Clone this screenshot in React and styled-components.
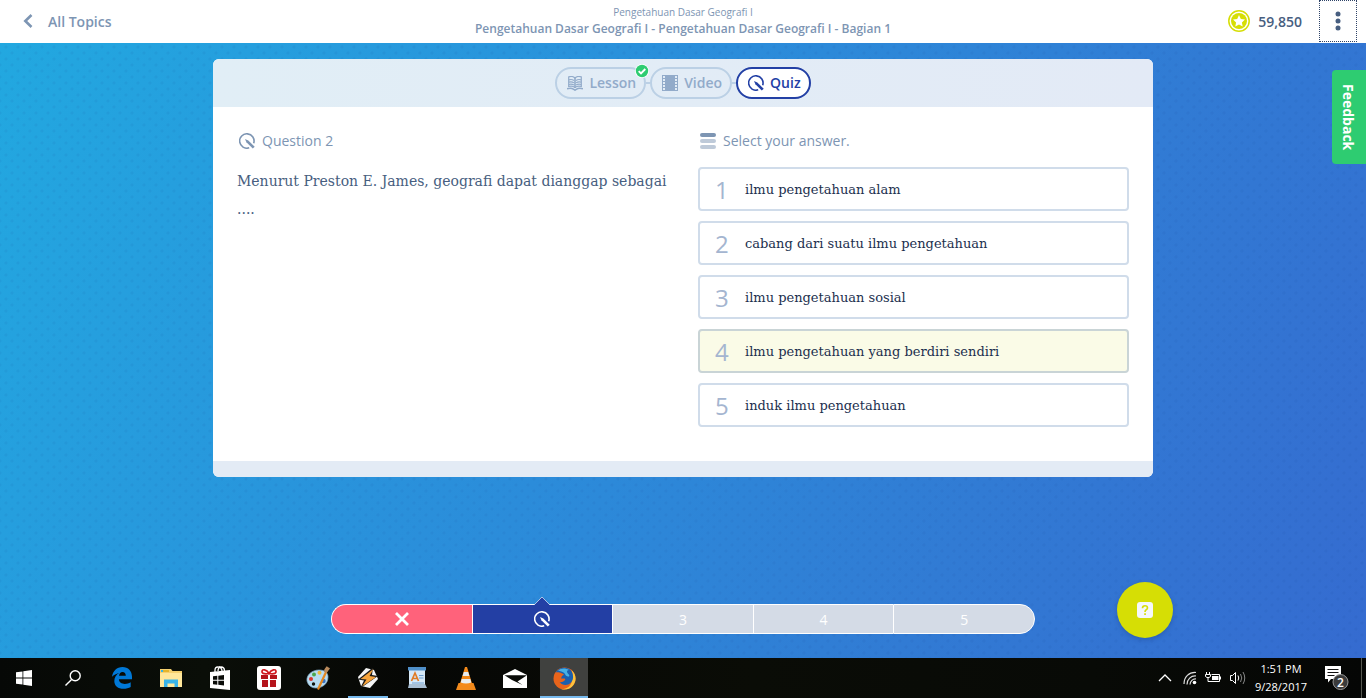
import React, { useState } from "react";
import styled, { createGlobalStyle, css } from "styled-components";

const sans = `"Open Sans", "Noto Sans", sans-serif`;
const serif = `"DejaVu Serif", "Liberation Serif", serif`;
const slate = "#7d95b3";
const navy = "#2340a5";

const Global = createGlobalStyle`
  *, *::before, *::after { box-sizing: border-box; }
  body { margin: 0; font-family: ${sans}; color: ${slate}; }
  button { font-family: inherit; cursor: pointer; margin: 0; }
  svg { display: block; flex: none; }
`;

const Page = styled.div`
  min-height: 100vh;
  display: flex;
  flex-direction: column;
`;

/* ---------- top bar ---------- */
const TopBar = styled.header`
  display: grid;
  grid-template-columns: 1fr auto 1fr;
  height: 43px;
  padding-bottom: 1px;
  background: #fff;
`;
const BackLink = styled.a`
  display: flex;
  align-items: center;
  gap: 14px;
  justify-self: start;
  padding-left: 22px;
  color: ${slate};
  font-size: 14px;
  font-weight: 600;
  text-decoration: none;
`;
const Titles = styled.div`
  text-align: center;
  padding-top: 5px;
`;
const Eyebrow = styled.div`
  font-size: 10px;
  line-height: 15px;
`;
const Title = styled.h1`
  margin: 0;
  font-size: 12px;
  line-height: 17px;
  font-weight: 600;
`;
const Account = styled.div`
  display: flex;
  align-items: center;
  justify-self: end;
  padding-right: 9px;
  color: #475e80;
  font-size: 14px;
  font-weight: 600;
`;
const Points = styled.span`
  margin: 0 17px 0 8px;
`;
const MenuButton = styled.button`
  display: grid;
  place-items: center;
  width: 38px;
  height: 42px;
  padding: 0;
  border: 1px dotted #2f4468;
  background: none;
`;

/* ---------- stage ---------- */
const Stage = styled.main`
  position: relative;
  flex: 1;
  display: flex;
  flex-direction: column;
  padding: 16px 16px 20px;
  background:
    radial-gradient(circle at 6px 4px, rgba(20, 60, 140, 0.07) 1px, transparent 2px) 0 0 / 12px 12px,
    radial-gradient(circle at 6px 4px, rgba(20, 60, 140, 0.07) 1px, transparent 2px) 6px 6px / 12px 12px,
    linear-gradient(117deg, #22a8e0 0%, #2b8cda 45%, #317bd4 72%, #356bd0 100%);
`;
const Card = styled.section`
  width: 100%;
  max-width: 940px;
  margin: 0 auto;
  border-radius: 6px;
  overflow: hidden;
  background: #fff;
`;
const CardHead = styled.nav`
  display: flex;
  justify-content: center;
  align-items: center;
  height: 48px;
  background: linear-gradient(90deg, #e1eef6, #e3eaf6);
`;
const CardFoot = styled.div`
  height: 16px;
  background: #e3ebf5;
`;
const Caption = styled.span`
  padding-bottom: 2px;
`;
const Step = styled.button`
  position: relative;
  display: flex;
  align-items: center;
  gap: 6px;
  height: 32px;
  padding: 0 8px 0 10px;
  border: 2px solid ${(p) => (p.$active ? navy : "#bbd0e5")};
  border-radius: 16px;
  background: ${(p) => (p.$active ? "#fff" : "transparent")};
  color: ${(p) => (p.$active ? navy : "#92abca")};
  font-size: 14px;
  font-weight: 600;
`;
const StepLink = styled.span`
  width: 4px;
  height: 2px;
  background: #bbd0e5;
`;
const DoneBadge = styled.span`
  position: absolute;
  top: -5px;
  right: -5px;
`;
const CardBody = styled.div`
  display: grid;
  grid-template-columns: 1fr 1fr;
  gap: 30px;
  padding: 24px 24px 34px;
`;
const Label = styled.h2`
  display: flex;
  align-items: center;
  gap: 7px;
  height: 20px;
  margin: 0 0 16px;
  padding-left: 2px;
  font-size: 14px;
  font-weight: 400;
`;
const Prompt = styled.p`
  margin: 0;
  color: #475e80;
  font-family: ${serif};
  font-size: 14px;
  line-height: 28px;
`;
const Answers = styled.ol`
  display: grid;
  gap: 10px;
  margin: 0;
  padding: 0;
  list-style: none;
`;
const Answer = styled.button`
  display: flex;
  align-items: center;
  width: 100%;
  height: 44px;
  padding: 0 14px 0 15px;
  border: 2px solid ${(p) => (p.$selected ? "#c9d4d6" : "#d0dcea")};
  border-radius: 4px;
  background: ${(p) => (p.$selected ? "#fafbe7" : "#fff")};
  color: #1c2f4e;
  font-family: ${serif};
  font-size: 13px;
  text-align: left;
`;
const AnswerNumber = styled.span`
  width: 30px;
  color: #a4b5d0;
  font-family: ${sans};
  font-size: 24px;
`;

const Dock = styled.footer`
  display: grid;
  grid-template-columns: 1fr minmax(0, 704px) 1fr;
  align-items: end;
  width: 100%;
  max-width: 980px;
  margin: auto auto 0;
`;
const Progress = styled.div`
  grid-column: 2;
  display: flex;
  height: 30px;
  margin-bottom: 4px;
`;
const tones = {
  wrong: "#ff627b",
  current: "#233fa4",
  idle: "#d4dbe6",
};
const Segment = styled.button`
  position: relative;
  flex: 1;
  display: grid;
  place-items: center;
  padding: 0;
  border: solid #fff;
  border-width: 1px 0 1px 1px;
  background: ${(p) => tones[p.$tone]};
  color: #fff;
  font-size: 14px;
  &:first-child { border-radius: 16px 0 0 16px; }
  &:last-child { border-radius: 0 16px 16px 0; border-right-width: 1px; }
`;
const Pointer = styled.svg`
  position: absolute;
  left: 50%;
  bottom: 100%;
  transform: translateX(-50%);
`;
const HelpButton = styled.button`
  justify-self: end;
  display: grid;
  place-items: center;
  width: 56px;
  height: 56px;
  padding: 0;
  border: 0;
  border-radius: 50%;
  background: #d6de05;
  box-shadow: 0 2px 5px rgba(20, 40, 100, 0.25);
`;
const FeedbackTab = styled.button`
  position: absolute;
  top: 27px;
  right: 0;
  width: 34px;
  height: 94px;
  padding: 0 2px 0 0;
  border: 0;
  border-radius: 4px 0 0 4px;
  background: #2ecc71;
  color: #fff;
  font-size: 14px;
  font-weight: 700;
  writing-mode: vertical-rl;
`;

/* ---------- taskbar ---------- */
const Taskbar = styled.footer`
  display: flex;
  justify-content: space-between;
  height: 40px;
  background: linear-gradient(90deg, #060806, #0a0e08 15%, #060705 30%, #0a0c06 55%, #080a06 80%, #050605);
  color: #fff;
`;
const Apps = styled.div`
  display: flex;
`;
const AppButton = styled.button`
  display: grid;
  place-items: center;
  width: 48px;
  padding: 0;
  border: 0;
  background: none;
  margin-right: 1px;
  ${(p) =>
    p.$open &&
    css`
      margin: 0 5px;
      width: 40px;
      box-shadow: inset 0 -2px #76b9ed;
    `}
  ${(p) =>
    p.$focused &&
    css`
      background: #40413f;
      box-shadow: inset 0 -2px #76b9ed;
    `}
`;
const Tray = styled.div`
  display: flex;
  align-items: center;
  gap: 8px;
  border-right: 1px solid #55574f;
  margin-right: 4px;
  padding-right: 12px;
`;
const TrayArrow = styled.span`
  margin-right: 3px;
`;
const Clock = styled.time`
  width: 54px;
  margin-right: 8px;
  font-size: 11px;
  line-height: 18px;
  text-align: center;
  white-space: nowrap;
`;

/* ---------- drawings ---------- */
const QuizIcon = () => (
  <svg width="16" height="16" viewBox="0 0 16 16" fill="none" stroke="currentColor" strokeWidth="1.6">
    <path d="M14.7 10.2A7.2 7.2 0 1 0 10.2 14.8" />
    <path d="M6 6l1.400 3.200 6.400 6.400 1.900-1.900-6.400-6.300z" fill="currentColor" stroke="none" />
  </svg>
);
const BookIcon = () => (
  <svg width="16" height="15" viewBox="0 0 16 15" fill="none" stroke="currentColor" strokeWidth="1.2">
    <path d="M8 2C6 .3 3.500.2 1.700.9v9.600c2-.6 4.500-.4 6.300 1 1.800-1.400 4.300-1.600 6.300-1V.9C12.500.2 10 .3 8 2z" />
    <path d="M8 2v10" strokeWidth="1.600" />
    <path d="M2 3.800q2.700-.8 4.900.6M2 6.200q2.700-.8 4.900.6M2 8.500q2.700-.8 4.900.6M14 3.800q-2.700-.8-4.900.6M14 6.200q-2.700-.8-4.900.6M14 8.500q-2.700-.8-4.900.6" />
    <path d="M0 12.800q4-1.400 6.800.6l1.200.8 1.200-.8q2.800-2 6.800-.6" strokeWidth="1.500" />
  </svg>
);
const FilmIcon = () => (
  <svg width="16" height="16" viewBox="0 0 16 16" fill="currentColor">
    <path d="M3.5 0h9v16h-9z" />
    <path
      fillRule="evenodd"
      d="M0 0h4v16H0zM1 1v2h2V1zM1 4v2h2V4zM1 7v2h2V7zM1 10v2h2v-2zM1 13v2h2v-2zM12 0h4v16h-4zM13 1v2h2V1zM13 4v2h2V4zM13 7v2h2V7zM13 10v2h2v-2zM13 13v2h2v-2z"
    />
  </svg>
);
const CheckBadge = () => (
  <svg width="14" height="14" viewBox="0 0 14 14">
    <circle cx="7" cy="7" r="7" fill="#fff" />
    <circle cx="7" cy="7" r="6.200" fill="#2ecc71" />
    <path d="M3.700 7.200l2.300 2.300L10.300 5" fill="none" stroke="#fff" strokeWidth="1.9" />
  </svg>
);
const ListIcon = () => (
  <svg width="16" height="16" viewBox="0 0 16 16" fill={slate}>
    <rect width="16" height="4" rx="2" />
    <rect y="6" width="16" height="4" rx="2" opacity=".5" />
    <rect y="12" width="16" height="4" rx="2" opacity=".5" />
  </svg>
);
const Coin = () => (
  <svg width="22" height="22" viewBox="0 0 22 22">
    <circle cx="11" cy="11" r="10.2" fill="#fff" stroke="#d6de05" strokeWidth="1.5" />
    <circle cx="11" cy="11" r="8" fill="#d6de05" />
    <path d="M11 5l1.8 4 4.2.5-3.1 2.9.8 4.2-3.7-2.1-3.7 2.1.8-4.2L5 9.5l4.2-.5z" fill="#fff" />
  </svg>
);

const WindowsIcon = () => (
  <svg width="16" height="16" viewBox="0 0 16 16" fill="#fff">
    <path d="M0 2.3L6.500 1.400v6.200H0zM7.300 1.300L16 0v7.600H7.300zM0 8.400h6.500v6.200L0 13.700zM7.300 8.400H16V16l-8.700-1.300z" />
  </svg>
);
const SearchIcon = () => (
  <svg width="16" height="16" viewBox="0 0 16 16" fill="none" stroke="#fff" strokeWidth="1.4">
    <circle cx="10.2" cy="5.8" r="5" />
    <path d="M6.6 9.4L.5 15.5" />
  </svg>
);
const EdgeIcon = () => (
  <svg width="20" height="22" viewBox="0 0 20 22">
    <path
      fill="#0078d7"
      d="M0 9.700C.8 4 4.800 0 10.500 0 16.300 0 20 4.200 20 9.600v2.700H6.900c.1 3 2.700 4.600 5.900 4.600 2.200 0 4.200-.6 5.900-1.600v4.700c-2 1.200-4.500 1.800-7.200 1.800-5.400 0-9.200-3-9.200-7.900 0-3.500 1.900-6.400 5-7.900C5.200 6.400 2.200 7.400 0 9.700zM7 8.800h6.800c0-2.500-1.200-3.900-3.300-3.900C8.600 4.900 7.400 6.500 7 8.800z"
    />
  </svg>
);
const FolderIcon = () => (
  <svg width="22" height="19" viewBox="0 0 22 19">
    <path d="M0 0h11l1.500 2H22v16H0z" fill="#f5d06f" />
    <path d="M0 4h22v14H0z" fill="#ffe79b" />
    <path d="M1 1h2v2H1z" fill="#38b3e8" />
    <path d="M3 1h6v2H3z" fill="#e5b52c" />
    <path d="M4 18v-7.500h14V18h-3.500v-3.500h-7V18z" fill="#38b3e8" />
  </svg>
);
const StoreIcon = () => (
  <svg width="22" height="24" viewBox="0 0 22 24">
    <path d="M6 6V4.200C6 1.800 7.200 1 8.800 1S13 2 13 5M9 5c0-3 1.200-4 3-4s3.500 1 3.500 4" fill="none" stroke="#fff" strokeWidth="1.3" />
    <path d="M1 6l20-2v20L1 22z" fill="#fff" />
    <path d="M4 10.300l4.300-.5v3.900H4zM9.300 9.700l5.700-.7v4.700H9.300zM4 14.700h4.300v4L4 18.200zM9.300 14.700H15v4.900l-5.700-.8z" fill="#0a0c08" />
  </svg>
);
const GiftIcon = () => (
  <svg width="24" height="24" viewBox="0 0 24 24">
    <rect width="24" height="24" rx="3" fill="#fff" />
    <path d="M4 9h7v4H4zM13 9h7v4h-7zM5 14h6v7H5zM13 14h6v7h-6z" fill="#b5141c" />
    <path d="M12 7.500C9 8 5 8.200 5 5.500S9.500 3 12 7.500c2.500-4.500 7-4.700 7-2S15 8 12 7.500z" fill="none" stroke="#d01820" strokeWidth="1.7" />
  </svg>
);
const PaintIcon = () => (
  <svg width="24" height="24" viewBox="0 0 24 24">
    <path d="M1 15C0 9 6 4 13 4c6 0 9 3 9 7 0 7-6 11-12 11-5 0-8-3-9-7z" fill="#b8dcf0" stroke="#7fa8c4" strokeWidth=".7" />
    <circle cx="7.500" cy="18" r="1.700" fill="#10150f" />
    <circle cx="5" cy="13" r="2" fill="#d8332b" />
    <circle cx="8" cy="8.500" r="2" fill="#4ba64e" />
    <circle cx="13.500" cy="6.800" r="2" fill="#eeb83a" />
    <circle cx="17.500" cy="15" r="2.200" fill="#3a74c4" />
    <path d="M12 23.500L20.500 5" stroke="#e58820" strokeWidth="2.2" />
    <path d="M18 5.500c0-3 2-4 3-5.500 0 1.500 2 1 3 2.500-1 1-2 3-3.500 4.500z" fill="#b98a5c" />
  </svg>
);
const WinampIcon = () => (
  <svg width="20" height="20" viewBox="0 0 20 20">
    <path d="M8 0l8 2 4 9-8 9-9-2-3-9z" fill="#f5f5f5" />
    <path d="M15-.5L0 11.500l6 1-4 8L20 8l-6-1z" fill="#1b1b1b" />
    <path d="M15.500 1L2.500 11l6 .5L4 18.500 18 9l-6.500-1z" fill="#f6a33b" />
  </svg>
);
const WordpadIcon = () => (
  <svg width="19" height="22" viewBox="0 0 19 22">
    <path d="M1 2h16v15H1z" fill="#d6e8f7" />
    <path d="M0 0h18v3.500H0z" fill="#4f8fc9" />
    <path d="M1 17h16l2 4H0z" fill="#a9bfd4" />
    <path d="M3.500 14L7 6l3.500 8M5 11.500h4" stroke="#e17b25" strokeWidth="1.7" fill="none" />
    <path d="M11 8.500h4.500M11 11h4.500M4 16h12" stroke="#6f9fd0" />
  </svg>
);
const ConeIcon = () => (
  <svg width="20" height="23" viewBox="0 0 20 23">
    <path d="M2.500 16h15L20 23H0z" fill="#f28a1c" />
    <path d="M9 0h2l5.500 18q-6.500 3-13 0z" fill="#f58a1a" />
    <path d="M7.800 5h4.400l1.200 4H6.600zM5.700 12h8.600l1 3.500q-5.300 2-10.600 0z" fill="#e9edf0" />
  </svg>
);
const MailIcon = () => (
  <svg width="24" height="19" viewBox="0 0 24 19">
    <path d="M0 6l12-6 12 6v13H0z" fill="#fff" />
    <path d="M1.500 6.300H24L14.500 12.500l5 3.500L9 11z" fill="#090b08" />
  </svg>
);
const FirefoxIcon = () => (
  <svg width="23" height="23" viewBox="0 0 23 23">
    <circle cx="11.500" cy="11.500" r="11" fill="#e8641b" />
    <path d="M18.500 3C23 7 24 13 20.500 18c-3 4-8 5.500-12.500 4 5 .5 9-2 10.500-6.500C20 11 20 7 18.500 3z" fill="#fcc23c" />
    <path d="M2.500 5.500C5 1 10.500-.5 15.500 1.500c3 1.500 5 5 4.500 9.500-.5 4-3.500 7-7.500 7-2.500 0-4.500-1-6-3 2 .5 3.500 0 5-1.500 1-1 1-2 0-2H8l1-2.500 2-1.500C9.500 6 8 6 6.500 5.500 5 5 3.500 5 2.500 5.500z" fill="#1b5fae" />
    <path d="M5 3.500C8 1 12.500.8 16 3c-2 0-2.500 1.500-1.500 3s2.500 2 1.500 3.500c-2 .5-3.500-1-4-2.500S8.500 4.500 5 3.500z" fill="#48b1e3" />
  </svg>
);
const ChevronUp = () => (
  <svg width="14" height="8" viewBox="0 0 14 8" fill="none" stroke="#fff" strokeWidth="1.3">
    <path d="M1 7l6-6 6 6" />
  </svg>
);
const WifiIcon = () => (
  <svg width="14" height="14" viewBox="0 0 14 14" fill="none" stroke="#ddd" strokeWidth="1.2">
    <path d="M1 13C1 6 6 1 13 1.500M4 13.500c0-5 4-9 9-8.500M7 13.500c0-3 3-6 6-5.500" />
    <circle cx="11.500" cy="11.500" r="1.800" fill="#fff" stroke="none" />
  </svg>
);
const BatteryIcon = () => (
  <svg width="17" height="12" viewBox="0 0 17 12" fill="none" stroke="#fff">
    <path d="M6.500 2.500h8v7h-9M15.500 4.500v3" />
    <path d="M7 4h6.500v4H7z" fill="#fff" stroke="none" />
    <path d="M1.500 0v2M4.500 0v2M.5 2.500h5v2l-1.500 1h-2l-1.500-1zM3 6v3.500h3" />
  </svg>
);
const SpeakerIcon = () => (
  <svg width="16" height="14" viewBox="0 0 16 14" fill="none" stroke="#fff">
    <path d="M.5 4.500h2l3-3v11l-3-3h-2zM8 4.500q1.500 2.500 0 5" />
    <path d="M10.500 3q2.500 4 0 8M13 1q3.500 6 0 12" stroke="#888" />
  </svg>
);
const NoticeIcon = () => (
  <svg width="25" height="26" viewBox="0 0 25 26">
    <path d="M1 1h16v13H7l-3 3.500V14H1z" fill="#fff" />
    <path d="M3.500 4.500h11M3.500 7.500h11M3.500 10.500h7" stroke="#111" />
    <circle cx="16.500" cy="17" r="7.500" fill="#3b3b3b" stroke="#999" />
    <text x="16.500" y="21.500" fontSize="12" fontWeight="600" fill="#fff" textAnchor="middle">2</text>
  </svg>
);

const answers = [
  "ilmu pengetahuan alam",
  "cabang dari suatu ilmu pengetahuan",
  "ilmu pengetahuan sosial",
  "ilmu pengetahuan yang berdiri sendiri",
  "induk ilmu pengetahuan",
];

const apps = [
  { name: "Start", icon: <WindowsIcon /> },
  { name: "Search", icon: <SearchIcon /> },
  { name: "Edge", icon: <EdgeIcon /> },
  { name: "Files", icon: <FolderIcon /> },
  { name: "Store", icon: <StoreIcon /> },
  { name: "Gifts", icon: <GiftIcon /> },
  { name: "Paint", icon: <PaintIcon /> },
  { name: "Winamp", icon: <WinampIcon />, open: true },
  { name: "WordPad", icon: <WordpadIcon /> },
  { name: "VLC", icon: <ConeIcon /> },
  { name: "Mail", icon: <MailIcon /> },
  { name: "Firefox", icon: <FirefoxIcon />, focused: true },
];

export default function App() {
  const [selected, setSelected] = useState(3);
  return (
    <Page>
      <Global />
      <TopBar>
        <BackLink href="#topics">
          <svg width="12" height="14" viewBox="0 0 12 14" fill="none" stroke={slate} strokeWidth="2.6">
            <path d="M9.5 1L3.3 7l6.2 6" />
          </svg>
          All Topics
        </BackLink>
        <Titles>
          <Eyebrow>Pengetahuan Dasar Geografi I</Eyebrow>
          <Title>Pengetahuan Dasar Geografi I - Pengetahuan Dasar Geografi I - Bagian 1</Title>
        </Titles>
        <Account>
          <Coin />
          <Points>59,850</Points>
          <MenuButton aria-label="Menu">
            <svg width="6" height="20" viewBox="0 0 6 20" fill="#475e80">
              <circle cx="3" cy="3" r="2.5" />
              <circle cx="3" cy="10" r="2.5" />
              <circle cx="3" cy="17" r="2.5" />
            </svg>
          </MenuButton>
        </Account>
      </TopBar>

      <Stage>
        <Card>
          <CardHead>
            <Step>
              <BookIcon />
              <Caption>Lesson</Caption>
              <DoneBadge>
                <CheckBadge />
              </DoneBadge>
            </Step>
            <StepLink />
            <Step>
              <FilmIcon />
              <Caption>Video</Caption>
            </Step>
            <StepLink />
            <Step $active>
              <QuizIcon />
              <Caption>Quiz</Caption>
            </Step>
          </CardHead>
          <CardBody>
            <div>
              <Label>
                <QuizIcon />
                <Caption>Question 2</Caption>
              </Label>
              <Prompt>Menurut Preston E. James, geografi dapat dianggap sebagai ....</Prompt>
            </div>
            <div>
              <Label>
                <ListIcon />
                <Caption>Select your answer.</Caption>
              </Label>
              <Answers>
                {answers.map((text, i) => (
                  <li key={text}>
                    <Answer $selected={i === selected} onClick={() => setSelected(i)}>
                      <AnswerNumber>{i + 1}</AnswerNumber>
                      {text}
                    </Answer>
                  </li>
                ))}
              </Answers>
            </div>
          </CardBody>
          <CardFoot />
        </Card>

        <Dock>
          <Progress>
            <Segment $tone="wrong" aria-label="Question 1, wrong">
              <svg width="14" height="14" viewBox="0 0 14 14" stroke="#fff" strokeWidth="2.8">
                <path d="M1 1l12 12M13 1L1 13" />
              </svg>
            </Segment>
            <Segment $tone="current" aria-label="Question 2, current">
              <Pointer width="16" height="8" viewBox="0 0 16 8">
                <path d="M0 8l8-8 8 8z" fill={navy} />
                <path d="M0 8l8-8 8 8" fill="none" stroke="#fff" strokeOpacity=".6" />
              </Pointer>
              <QuizIcon />
            </Segment>
            <Segment $tone="idle">3</Segment>
            <Segment $tone="idle">4</Segment>
            <Segment $tone="idle">5</Segment>
          </Progress>
          <HelpButton aria-label="Help">
            <svg width="16" height="16" viewBox="0 0 16 16">
              <rect width="16" height="16" rx="3" fill="#f5f7fb" />
              <path d="M5.500 6.200C5.500 4.500 6.500 3.700 8 3.700s2.500.9 2.500 2.200c0 1.800-2.500 1.900-2.500 4" fill="none" stroke="#d6de05" strokeWidth="1.6" />
              <path d="M7.200 11.200h1.700v1.700H7.200z" fill="#d6de05" />
            </svg>
          </HelpButton>
        </Dock>
        <FeedbackTab>Feedback</FeedbackTab>
      </Stage>

      <Taskbar>
        <Apps>
          {apps.map((a) => (
            <AppButton key={a.name} aria-label={a.name} $open={a.open} $focused={a.focused}>
              {a.icon}
            </AppButton>
          ))}
        </Apps>
        <Tray>
          <TrayArrow>
            <ChevronUp />
          </TrayArrow>
          <WifiIcon />
          <BatteryIcon />
          <SpeakerIcon />
          <Clock>
            1:51 PM
            <br />
            9/28/2017
          </Clock>
          <NoticeIcon />
        </Tray>
      </Taskbar>
    </Page>
  );
}
